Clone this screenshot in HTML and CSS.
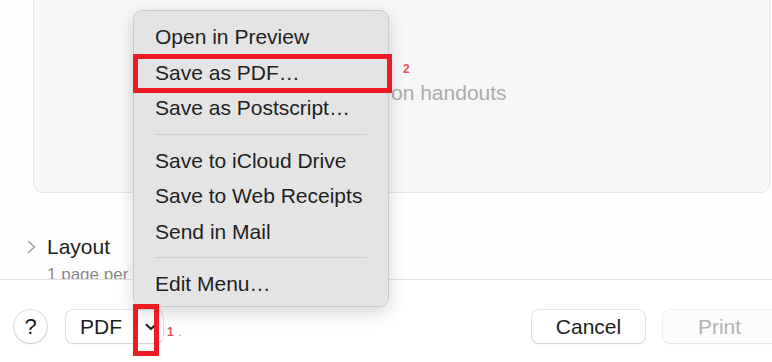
FILE: index.html
```html
<!DOCTYPE html>
<html lang="en">
<head>
    <meta charset="UTF-8">
    <meta name="viewport" content="width=device-width, initial-scale=1.0">
    <title>Print</title>
    <link rel="stylesheet" href="styles.css">
</head>
<body>
    <div class="window">
        <div class="sheet-body">
            <div class="options-panel">
                <div class="option-row">
                    <span class="option-label">on handouts</span>
                </div>
            </div>

            <div class="section">
                <div class="section-head">
                    <svg class="disclosure" width="9" height="14" viewBox="0 0 9 14">
                        <polyline points="1.5,1.5 7.5,7 1.5,12.5" fill="none" stroke="#a0a0a0" stroke-width="1.6" stroke-linecap="round" stroke-linejoin="round"/>
                    </svg>
                    <span class="section-title">Layout</span>
                </div>
                <div class="section-summary">1 page per</div>
            </div>
        </div>

        <div class="footer">
            <button class="help-btn">?</button>
            <div class="pdf-btn">
                <span class="pdf-label">PDF</span>
                <svg class="pdf-chevron" width="12" height="8" viewBox="0 0 12 8">
                    <polyline points="1.5,1.8 6,6 10.5,1.8" fill="none" stroke="#262626" stroke-width="2.2" stroke-linecap="round" stroke-linejoin="round"/>
                </svg>
            </div>
            <span class="note note-1">1<span class="note-dot">.</span></span>
            <button class="btn btn-cancel">Cancel</button>
            <button class="btn btn-print">Print</button>
        </div>

        <!-- popup menu opened from the PDF button -->
        <div class="pdf-menu">
            <div class="menu-item">Open in Preview</div>
            <div class="menu-item">Save as PDF…</div>
            <div class="menu-item">Save as Postscript…</div>
            <div class="menu-sep"></div>
            <div class="menu-item">Save to iCloud Drive</div>
            <div class="menu-item">Save to Web Receipts</div>
            <div class="menu-item">Send in Mail</div>
            <div class="menu-sep"></div>
            <div class="menu-item">Edit Menu…</div>
        </div>

        <!-- tutorial callouts -->
        <div class="callout callout-pdf"></div>
        <span class="note note-2">2</span>
        <div class="callout callout-chevron"></div>
    </div>
</body>
</html>
```

FILE: styles.css
```css
* {
    box-sizing: border-box;
}

body {
    margin: 0;
    font-family: 'Liberation Sans', Arial, sans-serif;
    background: #ffffff;
    color: #1f1f1f;
}

.window {
    position: relative;
    width: 772px;
    height: 362px;
    overflow: hidden;
    background: #fefefe;
}

.sheet-body {
    height: 279px;
    overflow: hidden;
}

.options-panel {
    margin: -10px 2px 0 33px;
    height: 203px;
    background: #f7f7f7;
    border: 1px solid #e7e7e7;
    border-radius: 9px;
    padding-top: 90px;
}

.option-row {
    padding-left: 357px;
}

.option-label {
    font-size: 21px;
    line-height: 24px;
    color: #ababab;
}

.section {
    padding: 42px 0 0 27px;
}

.section-head {
    display: flex;
    align-items: center;
    gap: 11px;
    height: 24px;
}

.section-title {
    font-size: 21px;
    line-height: 24px;
    color: #222;
}

.section-summary {
    margin-top: 6px;
    padding-left: 20px;
    font-size: 17px;
    line-height: 20px;
    color: #8a8a8a;
}

.footer {
    display: flex;
    align-items: flex-start;
    height: 83px;
    padding: 30px 0 0 14px;
    border-top: 1px solid #e2e2e2;
    background: #ffffff;
}

.help-btn {
    width: 33px;
    height: 33px;
    padding: 0;
    border: none;
    border-radius: 50%;
    background: #fff;
    box-shadow: 0 0 0 1px rgba(0,0,0,0.12), 0 1px 2px rgba(0,0,0,0.12);
    font-family: inherit;
    font-size: 22px;
    color: #1e1e1e;
}

.pdf-btn {
    display: flex;
    align-items: center;
    width: 97px;
    height: 33px;
    margin-left: 19px;
    padding-left: 14px;
    border-radius: 7px;
    background: #fff;
    box-shadow: 0 0 0 1px rgba(0,0,0,0.1), 0 1px 2px rgba(0,0,0,0.1);
}

.pdf-label {
    font-size: 21px;
    color: #1e1e1e;
}

.pdf-chevron {
    margin-left: 23px;
}

.note {
    font-size: 12px;
    color: #e8505a;
}

.note-1 {
    align-self: center;
    margin: -8px 0 0 4px;
    font-weight: bold;
}

.note-dot {
    margin-left: 5px;
    font-weight: normal;
    font-size: 10px;
}

.btn {
    width: 113px;
    height: 33px;
    padding: 0;
    border: none;
    border-radius: 7px;
    background: #fff;
    box-shadow: 0 0 0 1px rgba(0,0,0,0.1), 0 1px 2px rgba(0,0,0,0.1);
    font-family: inherit;
    font-size: 21px;
    color: #1e1e1e;
}

.btn-cancel {
    margin-left: auto;
}

.btn-print {
    width: 109px;
    margin-left: 18px;
    border-radius: 7px 0 0 7px;
    background: #fcfcfc;
    box-shadow: 0 0 0 1px rgba(0,0,0,0.06), 0 1px 2px rgba(0,0,0,0.05);
    color: #b3b3b3;
    text-indent: 4px;
}

.pdf-menu {
    position: absolute;
    left: 133px;
    top: 10px;
    width: 256px;
    height: 297px;
    padding: 8px 0 0;
    background: #e4e4e4;
    border: 1px solid #cbcbcb;
    border-radius: 9px;
    box-shadow: 0 6px 18px rgba(0,0,0,0.16);
}

.menu-item {
    padding-left: 21px;
    font-size: 21px;
    line-height: 35.5px;
    color: #1f1f1f;
    white-space: nowrap;
}

.menu-sep {
    height: 17px;
    margin: 0 21px;
    background: linear-gradient(#cfcfcf, #cfcfcf) center / 100% 1px no-repeat;
}

.callout {
    position: absolute;
    border: 5px solid #ed1c24;
}

.callout-pdf {
    left: 133px;
    top: 54px;
    width: 259px;
    height: 39px;
}

.callout-chevron {
    left: 133px;
    top: 304px;
    width: 26px;
    height: 52px;
}

.note-2 {
    position: absolute;
    left: 403px;
    top: 62px;
    font-weight: bold;
}
```
